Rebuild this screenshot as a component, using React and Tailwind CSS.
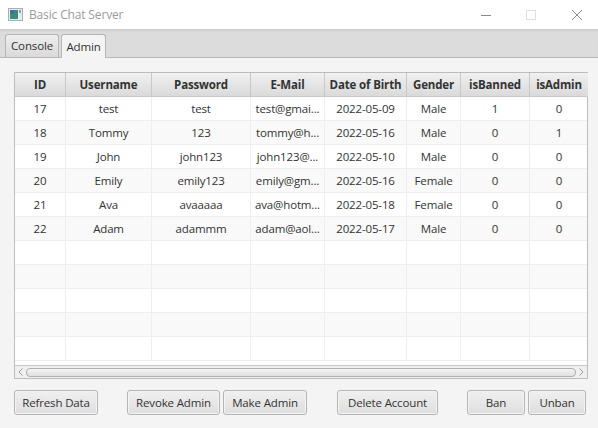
const columns = ['ID', 'Username', 'Password', 'E-Mail', 'Date of Birth', 'Gender', 'isBanned', 'isAdmin'];

const users = [
  ['17', 'test', 'test', 'test@gmai...', '2022-05-09', 'Male', '1', '0'],
  ['18', 'Tommy', '123', 'tommy@h...', '2022-05-16', 'Male', '0', '1'],
  ['19', 'John', 'john123', 'john123@...', '2022-05-10', 'Male', '0', '0'],
  ['20', 'Emily', 'emily123', 'emily@gm...', '2022-05-16', 'Female', '0', '0'],
  ['21', 'Ava', 'avaaaaa', 'ava@hotm...', '2022-05-18', 'Female', '0', '0'],
  ['22', 'Adam', 'adammm', 'adam@aol...', '2022-05-17', 'Male', '0', '0'],
  ['', '', '', '', '', '', '', ''],
  ['', '', '', '', '', '', '', ''],
  ['', '', '', '', '', '', '', ''],
  ['', '', '', '', '', '', '', ''],
  ['', '', '', '', '', '', '', ''],
];

const gridCols = 'grid grid-cols-[51px_86px_99px_74px_82px_54px_69px_58px]';

const FxButton = ({ label, className }) => (
  <button
    className={`h-[25px] shrink-0 rounded-[3px] border border-[#b5b5b5] bg-gradient-to-b from-[#f0f0f0] to-[#dedede] text-[#333] shadow-[inset_0_0_0_1px_#f4f4f4] ${className}`}
  >
    {label}
  </button>
);

export default function App() {
  return (
    <div className="flex h-[428px] w-[598px] flex-col overflow-hidden bg-[#f4f4f4] font-['Open_Sans',sans-serif] text-[11.5px] tracking-[-0.15px] text-[#333]">
      {/* Title bar */}
      <div className="flex h-[29px] items-center bg-white">
        <svg className="ml-2 h-[13px] w-[15px]" viewBox="0 0 15 13">
          <rect x="0" y="0" width="15" height="13" fill="#a9aeb0" />
          <rect x="1" y="1" width="13" height="11" fill="#e9ecec" />
          <rect x="2" y="2" width="8" height="9" fill="#3f8a7c" />
          <rect x="2" y="2" width="4" height="4" fill="#43709c" />
          <rect x="11" y="2" width="2" height="3" fill="#8aa0ac" />
        </svg>
        <span className="ml-[6px] text-[12px] text-[#9b9b9b]">Basic Chat Server</span>
        <div className="ml-auto flex items-center">
          <svg className="h-[10px] w-[10px]" viewBox="0 0 10 10">
            <path d="M0 5.5H10" stroke="#8a8a8a" strokeWidth="1" />
          </svg>
          <svg className="ml-[35px] h-[10px] w-[10px]" viewBox="0 0 10 10">
            <rect x="0.5" y="0.5" width="9" height="9" fill="none" stroke="#e0e0e0" strokeWidth="1" />
          </svg>
          <svg className="ml-[36px] mr-[16px] h-[10px] w-[10px]" viewBox="0 0 10 10">
            <path d="M0 0L10 10M10 0L0 10" stroke="#8a8a8a" strokeWidth="1" />
          </svg>
        </div>
      </div>

      {/* Tab header */}
      <div className="flex h-[29px] items-end gap-[2px] border-b border-[#b8b8b8] bg-[#dcdcdc] pl-[5px] shadow-[inset_0_3px_3px_-2px_#c4c4c4]">
        <div className="flex h-[23px] w-[54px] items-center justify-center rounded-t-[3px] border border-b-0 border-[#b5b5b5] bg-gradient-to-b from-[#eeeeee] to-[#dadada]">
          Console
        </div>
        <div className="z-10 -mb-px flex h-[24px] w-[45px] items-center justify-center rounded-t-[3px] border border-b-0 border-[#b5b5b5] bg-[#f4f4f4]">
          Admin
        </div>
      </div>

      {/* Admin tab */}
      <div className="flex flex-1 flex-col pt-[14px] pr-[10px] pl-[14px]">
        <div className="flex h-[307px] w-[574px] flex-col border border-[#bdbdbd] bg-white">
          <div className={`${gridCols} h-[24px] shrink-0`}>
            {columns.map(col => (
              <div
                key={col}
                className="flex items-center justify-center border-r border-b border-[#c8c8c8] bg-gradient-to-b from-[#f0f0f0] to-[#dadada] font-bold whitespace-nowrap last:border-r-0"
              >
                {col}
              </div>
            ))}
          </div>
          <div className="flex-1 overflow-hidden">
            {users.map((user, i) => (
              <div key={i} className={`${gridCols} h-[24px] ${i % 2 ? 'bg-[#f9f9f9]' : 'bg-white'}`}>
                {user.map((value, j) => (
                  <div
                    key={j}
                    className="flex items-center justify-center border-r border-b border-[#eeeeee] whitespace-nowrap last:border-r-0"
                  >
                    {value}
                  </div>
                ))}
              </div>
            ))}
          </div>
          {/* Horizontal scrollbar */}
          <div className="flex h-[13px] shrink-0 items-center border-t border-[#c8c8c8] bg-[#efefef]">
            <svg className="ml-[3px] h-[8px] w-[5px]" viewBox="0 0 5 8">
              <path d="M4.5 0.5L1 4L4.5 7.5" fill="none" stroke="#999" strokeWidth="1" />
            </svg>
            <div className="ml-[3px] h-[9px] flex-1 rounded-[4px] border border-[#b0b0b0] bg-gradient-to-b from-[#f4f4f4] to-[#e0e0e0]" />
            <svg className="mr-[3px] ml-[3px] h-[8px] w-[5px]" viewBox="0 0 5 8">
              <path d="M0.5 0.5L4 4L0.5 7.5" fill="none" stroke="#999" strokeWidth="1" />
            </svg>
          </div>
        </div>

        {/* Actions */}
        <div className="mt-[11px] flex">
          <FxButton label="Refresh Data" className="w-[84px]" />
          <FxButton label="Revoke Admin" className="ml-[29px] w-[93px]" />
          <FxButton label="Make Admin" className="ml-[3px] w-[84px]" />
          <FxButton label="Delete Account" className="ml-[30px] w-[101px]" />
          <FxButton label="Ban" className="ml-[29px] w-[58px]" />
          <FxButton label="Unban" className="ml-[3px] w-[58px]" />
        </div>
      </div>
    </div>
  );
}
